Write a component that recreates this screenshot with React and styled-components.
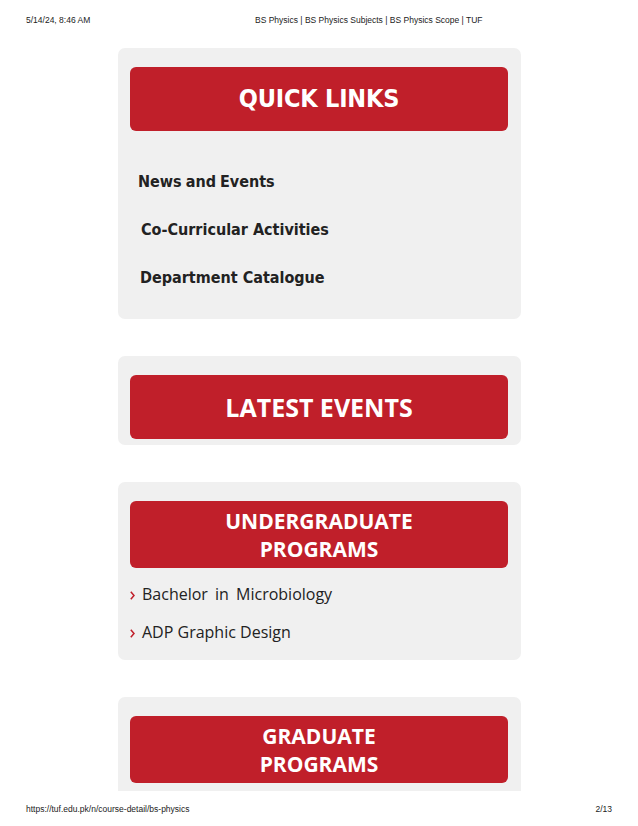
import React from "react";
import styled, { createGlobalStyle } from "styled-components";

const GlobalStyle = createGlobalStyle`
  html, body {
    margin: 0;
    padding: 0;
    background: #ffffff;
  }
  body {
    width: 638px;
    height: 826px;
    overflow: hidden;
    font-family: "Liberation Sans", Arial, sans-serif;
  }
`;

const Page = styled.div`
  width: 638px;
  height: 826px;
  display: flex;
  flex-direction: column;
`;

const PrintHeader = styled.div`
  height: 40px;
  padding-left: 26px;
  display: grid;
  grid-template-columns: 229px auto;
  align-items: center;
  font-size: 8.5px;
  color: #222;
`;

const PrintFooter = styled.div`
  flex: 1;
  padding: 0 26px;
  display: flex;
  justify-content: space-between;
  align-items: center;
  font-size: 8.5px;
  color: #222;
`;

const Content = styled.div`
  height: 751px;
  overflow: hidden;
  padding: 8px 0 0 118px;
  box-sizing: border-box;
  display: flex;
  flex-direction: column;
  gap: 37px;
`;

const Card = styled.div`
  width: 403px;
  flex-shrink: 0;
  background: #f0f0f0;
  border-radius: 7px;
  padding: 19px 13px ${(p) => p.bottom || 0}px 12px;
  box-sizing: border-box;
`;

const Banner = styled.div`
  height: ${(p) => (p.tall ? 67 : 64)}px;
  background: #c01f2a;
  border-radius: 6px;
  display: flex;
  flex-direction: column;
  align-items: center;
  justify-content: center;
  text-align: center;
  color: #ffffff;
  font-family: ${(p) =>
    p.condensed
      ? `"DejaVu Sans", sans-serif`
      : `"Open Sans", "Noto Sans", sans-serif`};
  font-stretch: ${(p) => (p.condensed ? "condensed" : "normal")};
  font-weight: 700;
  font-size: ${(p) => (p.condensed ? 25 : p.tall ? 21 : 25)}px;
  line-height: ${(p) => (p.tall ? 28 : 32)}px;
  letter-spacing: ${(p) => (p.condensed ? "-0.2px" : "0")};
`;

const BannerLine = styled.span`
  display: block;
`;

const QuickList = styled.div`
  margin-top: 39px;
  display: flex;
  flex-direction: column;
  gap: 24px;
`;

const QuickLink = styled.a`
  display: block;
  padding-left: ${(p) => 8 + (p.indent || 0)}px;
  font-family: "DejaVu Sans Condensed", "DejaVu Sans", sans-serif;
  font-stretch: condensed;
  font-weight: 700;
  font-size: 16px;
  line-height: 24px;
  color: #222222;
  text-decoration: none;
  word-spacing: ${(p) => (p.tight ? "-1px" : "0")};
`;

const ProgramList = styled.ul`
  list-style: none;
  margin: 15px 0 0;
  padding: 0;
  display: flex;
  flex-direction: column;
  gap: 16px;
`;

const ProgramItem = styled.li`
  display: flex;
  align-items: center;
  gap: 7px;
  font-family: "Open Sans", "Noto Sans", sans-serif;
  font-size: 16px;
  line-height: 22px;
  color: #222222;
  word-spacing: ${(p) => (p.spaced ? "3px" : "0")};
`;

const Chevron = () => (
  <svg width="5" height="9" viewBox="0 0 5 9" style={{ marginTop: 2 }}>
    <path d="M0.8 0.8 L4 4.5 L0.8 8.2" fill="none" stroke="#c01f2a" strokeWidth="1.5" />
  </svg>
);

const quickLinks = [
  { title: "News and Events", indent: 0, tight: true },
  { title: "Co-Curricular Activities", indent: 3 },
  { title: "Department Catalogue", indent: 2 },
];

const undergrad = [
  { title: "Bachelor in Microbiology", spaced: true },
  { title: "ADP Graphic Design" },
];

export default function App() {
  return (
    <>
      <GlobalStyle />
      <Page>
        <PrintHeader>
          <span>5/14/24, 8:46 AM</span>
          <span>BS Physics | BS Physics Subjects | BS Physics Scope | TUF</span>
        </PrintHeader>

        <Content>
          <Card bottom={29}>
            <Banner condensed>QUICK LINKS</Banner>
            <QuickList>
              {quickLinks.map((l) => (
                <QuickLink key={l.title} href="#" indent={l.indent} tight={l.tight}>
                  {l.title}
                </QuickLink>
              ))}
            </QuickList>
          </Card>

          <Card bottom={6}>
            <Banner>LATEST EVENTS</Banner>
          </Card>

          <Card bottom={17}>
            <Banner tall>
              <BannerLine>UNDERGRADUATE</BannerLine>
              <BannerLine>PROGRAMS</BannerLine>
            </Banner>
            <ProgramList>
              {undergrad.map((p) => (
                <ProgramItem key={p.title} spaced={p.spaced}>
                  <Chevron />
                  {p.title}
                </ProgramItem>
              ))}
            </ProgramList>
          </Card>

          <Card bottom={20}>
            <Banner tall>
              <BannerLine>GRADUATE</BannerLine>
              <BannerLine>PROGRAMS</BannerLine>
            </Banner>
          </Card>
        </Content>

        <PrintFooter>
          <span>https://tuf.edu.pk/n/course-detail/bs-physics</span>
          <span>2/13</span>
        </PrintFooter>
      </Page>
    </>
  );
}
